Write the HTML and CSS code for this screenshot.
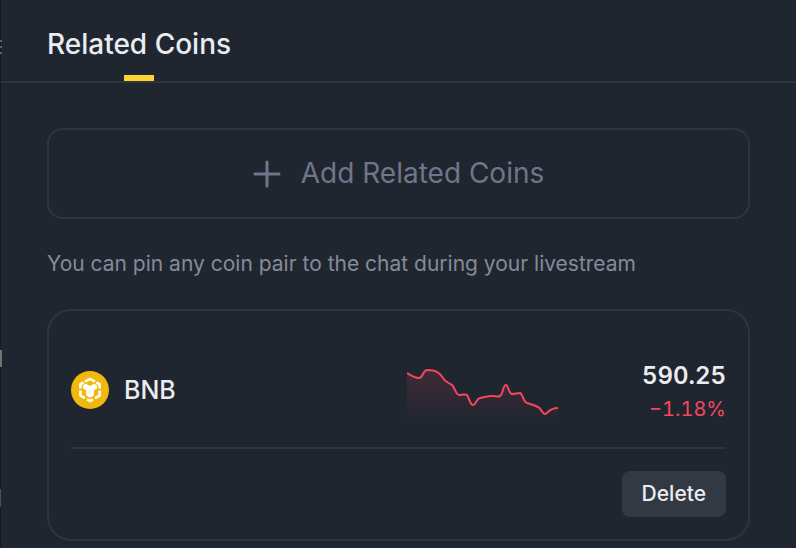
FILE: index.html
```html
<!DOCTYPE html>
<html lang="en">
<head>
    <meta charset="UTF-8">
    <meta name="viewport" content="width=device-width, initial-scale=1.0">
    <title>Related Coins</title>
    <link rel="stylesheet" href="styles.css">
</head>
<body>

<!-- Sliver of the page behind the panel -->
<div class="behind">
    <span class="tick tick-menu"></span>
    <span class="tick tick-light"></span>
    <span class="tick tick-dim"></span>
</div>

<main class="panel">
    <header class="tabs">
        <h1 class="tab active">Related Coins</h1>
    </header>

    <div class="content">
        <button type="button" class="add-btn">
            <svg class="plus" viewBox="0 0 28 28" aria-hidden="true">
                <path d="M14 2v24M2 14h24"/>
            </svg>
            Add Related Coins
        </button>

        <p class="hint">You can pin any coin pair to the chat during your livestream</p>

        <section class="card">
            <div class="coin">
                <svg class="coin-logo" viewBox="0 0 38 38" aria-hidden="true">
                    <circle cx="19" cy="19" r="19" fill="#f0b90b"/>
                    <g fill="none" stroke="#fff" stroke-width="2.6" stroke-linejoin="miter">
                        <path d="M14 10.700L19 7.900l5 2.800"/>
                        <path d="M12.600 11.500L9.400 13.300v4.200"/>
                        <path d="M25.400 11.500l3.200 1.800v4.200"/>
                        <path d="M9.400 19.500v5L14 27.200"/>
                        <path d="M28.600 19.500v5L24 27.200"/>
                        <path d="M16 28.300L19 30l3-1.700"/>
                    </g>
                    <path fill="#fff" d="M12 14.200l2.800-1.500 4.200 2.400 4.200-2.400 2.800 1.500v3.200l-3.200 2v5.200L19 26.800l-3.800-2.200v-5.200l-3.200-2z"/>
                </svg>
                <span class="coin-name">BNB</span>
                <svg class="chart" viewBox="0 0 152 56" role="img" aria-label="BNB price chart">
                    <defs>
                        <linearGradient id="fade" x1="0" y1="0" x2="0" y2="1">
                            <stop offset="0" stop-color="#f6465d" stop-opacity="0.15"/>
                            <stop offset="1" stop-color="#f6465d" stop-opacity="0"/>
                        </linearGradient>
                    </defs>
                    <path fill="url(#fade)" d="M0 8C5 11 9 13 12 13C16 13 16 5 20 5C24 5 27 5 30 7C35 9 36 15 40 17C43 19 44 19 45 20C48 23 49 30 52 30C55 30 57 29 60 30C62 32 63 40 66 40C69 40 69 34 73 33C78 32 81 31 85 31C88 31 91 32 93 31C96 29 96 20 99 20C101 20 102 29 105 29C108 29 110 28 113 28C116 29 116 37 120 38C124 39 127 40 131 42C134 43 135 49 138 49C141 49 141 43 151 43V56H0Z"/>
                    <path class="line" d="M0 8C5 11 9 13 12 13C16 13 16 5 20 5C24 5 27 5 30 7C35 9 36 15 40 17C43 19 44 19 45 20C48 23 49 30 52 30C55 30 57 29 60 30C62 32 63 40 66 40C69 40 69 34 73 33C78 32 81 31 85 31C88 31 91 32 93 31C96 29 96 20 99 20C101 20 102 29 105 29C108 29 110 28 113 28C116 29 116 37 120 38C124 39 127 40 131 42C134 43 135 49 138 49C141 49 141 43 151 43"/>
                </svg>
                <div class="quote">
                    <div class="price">590.25</div>
                    <div class="change">−1.18%</div>
                </div>
            </div>
            <div class="actions">
                <button type="button" class="delete-btn">Delete</button>
            </div>
        </section>
    </div>
</main>

</body>
</html>
```
FILE: styles.css
```css
* {
    margin: 0;
    padding: 0;
    box-sizing: border-box;
}
body {
    display: flex;
    min-height: 100vh;
    background: #202630;
    color: #eaecef;
    font-family: Inter, Lato, sans-serif;
}
button {
    border: none;
    font-family: inherit;
    cursor: pointer;
}
.behind {
    position: relative;
    flex: none;
    width: 1px;
    background: #181a20;
}
.tick {
    position: absolute;
    left: 0;
    width: 2px;
}
.tick-menu {
    top: 40px;
    height: 14px;
    background: repeating-linear-gradient(#5b5f66 0 2px, transparent 2px 6px);
}
.tick-light {
    top: 350px;
    height: 17px;
    background: #70756f;
}
.tick-dim {
    top: 489px;
    width: 1px;
    height: 18px;
    background: #4b4e53;
}
.panel {
    flex: 1;
}
.tabs {
    display: flex;
    padding: 0 46px;
    border-bottom: 2px solid #2f3540;
}
.tab {
    position: relative;
    height: 81px;
    padding-top: 24px;
    font-size: 28px;
    font-weight: 500;
    line-height: 40px;
}
.tab.active::after {
    content: "";
    position: absolute;
    left: 50%;
    bottom: 0;
    width: 30px;
    height: 6px;
    margin-left: -15px;
    background: #fcd535;
}
.content {
    padding: 45px 46px 8px;
}
.add-btn {
    display: flex;
    justify-content: center;
    align-items: center;
    gap: 20px;
    width: 100%;
    padding: 24px;
    border: 2px solid #2f3540;
    border-radius: 16px;
    background: transparent;
    color: #707589;
    font-size: 28px;
    line-height: 39px;
}
.plus {
    width: 28px;
    height: 28px;
    fill: none;
    stroke: #707589;
    stroke-width: 3;
    stroke-linecap: round;
}
.hint {
    margin: 29px 0;
    color: #848b99;
    font-size: 21px;
    line-height: 32px;
}
.card {
    padding: 22px;
    border: 2px solid #2f3540;
    border-radius: 24px;
}
.coin {
    display: flex;
    align-items: center;
    padding: 22px 0;
    border-bottom: 2px solid #2f3540;
}
.coin-logo {
    width: 38px;
    height: 38px;
    margin-right: 15px;
}
.coin-name {
    flex: 1;
    font-size: 25px;
    font-weight: 500;
    line-height: 32px;
}
.chart {
    width: 152px;
    height: 56px;
    margin-top: 6px;
}
.chart .line {
    fill: none;
    stroke: #f6465d;
    stroke-width: 2;
    stroke-linejoin: round;
}
.quote {
    width: 167px;
    padding-top: 4px;
    text-align: right;
    font-variant-numeric: tabular-nums;
}
.price {
    font-size: 24px;
    font-weight: 600;
    line-height: 34px;
}
.change {
    color: #f6465d;
    font-size: 20px;
    line-height: 32px;
}
.actions {
    display: flex;
    justify-content: flex-end;
    padding-top: 22px;
}
.delete-btn {
    padding: 7px 20px;
    border-radius: 8px;
    background: #333943;
    color: #eaecef;
    font-size: 21px;
    font-weight: 500;
    line-height: 32px;
}
```
